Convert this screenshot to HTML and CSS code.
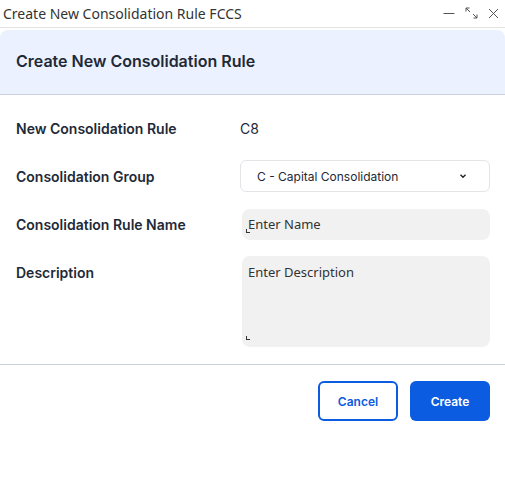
FILE: index.html
```html
<!DOCTYPE html>
<html>
<head>
<meta charset="utf-8">
<link rel="stylesheet" href="styles.css">
</head>
<body>
<div class="window">
  <div class="titlebar">
    <span class="title">Create New Consolidation Rule FCCS</span>
    <div class="controls">
      <svg class="ctl" width="12" height="12" viewBox="0 0 12 12"><path d="M0.5 6.5H11.5" stroke="#555" stroke-width="1" fill="none"/></svg>
      <svg class="ctl" width="13" height="12" viewBox="0 0 13 12"><path d="M1 4.5V1H4.5M1 1L5 5M12 7.5V11H8.5M12 11L8 7" stroke="#555" stroke-width="1" fill="none"/></svg>
      <svg class="ctl" width="11" height="11" viewBox="0 0 11 11"><path d="M1 1L10 10M10 1L1 10" stroke="#555" stroke-width="1" fill="none"/></svg>
    </div>
  </div>
  <div class="dialog">
    <div class="header"><h1>Create New Consolidation Rule</h1></div>
    <div class="form">
      <div class="row">
        <div class="label">New Consolidation Rule</div>
        <div class="value">C8</div>
      </div>
      <div class="row">
        <div class="label">Consolidation Group</div>
        <div class="select">
          <span>C - Capital Consolidation</span>
          <svg width="10" height="10" viewBox="0 0 10 10"><path d="M2.5 3.8L5 6.2L7.5 3.8" stroke="#222" stroke-width="1.4" fill="none"/></svg>
        </div>
      </div>
      <div class="row">
        <div class="label">Consolidation Rule Name</div>
        <div class="input"><span class="ph">Enter Name</span><span class="grip"></span></div>
      </div>
      <div class="row top">
        <div class="label">Description</div>
        <div class="input area"><span class="ph">Enter Description</span><span class="grip"></span></div>
      </div>
    </div>
    <div class="footer">
      <button class="btn outline">Cancel</button>
      <button class="btn primary">Create</button>
    </div>
  </div>
</div>
</body>
</html>
```
FILE: styles.css
```css
* { box-sizing: border-box; }
html, body { margin: 0; padding: 0; background: #fff; }
body { width: 505px; height: 498px; overflow: hidden; font-family: Inter, "Liberation Sans", sans-serif; }
.titlebar {
  height: 28px;
  display: flex;
  align-items: center;
  justify-content: space-between;
  padding: 0 6px 1px 3px;
  border-bottom: 1px solid #e3e3e3;
}
.title { font-family: "Noto Sans", sans-serif; font-size: 14px; color: #333; }
.controls { display: flex; gap: 10px; align-items: center; }
.ctl { display: block; }
.dialog { padding-top: 2px; }
.header {
  background: #ebf1fe;
  border-radius: 8px 8px 0 0;
  border-bottom: 1px solid #c8d0da;
  height: 65px;
  display: flex;
  align-items: center;
  padding: 0 16px;
}
h1 { margin: 0; font-size: 16px; font-weight: 600; color: #1f2937; position: relative; top: -1px; }
.form { padding: 17px 15px 17px 16px; display: flex; flex-direction: column; gap: 16px; }
.row { display: flex; align-items: center; min-height: 32px; }
.row.top { align-items: flex-start; }
.label { width: 224px; font-size: 14px; font-weight: 600; color: #1f2937; }
.row.top .label { padding-top: 8px; }
.value { font-size: 14px; color: #1f2937; }
.select {
  width: 250px; height: 32px;
  border: 1px solid #e2e4e8; border-radius: 6px;
  display: flex; align-items: center; justify-content: space-between;
  padding: 0 21px 0 16px;
  font-size: 12px; color: #1f2937;
}
.select svg { display: block; }
.input {
  position: relative;
  margin-left: 2px;
  width: 248px; height: 31px;
  background: #f1f1f1; border-radius: 8px;
  padding: 6px 6px;
  font-family: "Noto Sans", sans-serif; font-size: 13px; color: #333;
}
.input.area { height: 91px; padding-top: 7px; }
.grip {
  position: absolute; left: 4px; bottom: 7px;
  width: 4px; height: 4px;
  border-left: 1px solid #333; border-bottom: 1px solid #333;
}
.footer {
  border-top: 1px solid #c8d0da;
  display: flex; justify-content: flex-end; gap: 12px;
  padding: 16px 15px 0 0;
}
.btn {
  width: 80px; height: 40px; border-radius: 6px;
  font-family: Inter, sans-serif; font-size: 12px; font-weight: 600;
  cursor: pointer;
}
.btn.outline { background: #fff; border: 2px solid #0b5ce0; color: #0b5ce0; }
.btn.primary { background: #0b5ce0; border: none; color: #fff; }
```
